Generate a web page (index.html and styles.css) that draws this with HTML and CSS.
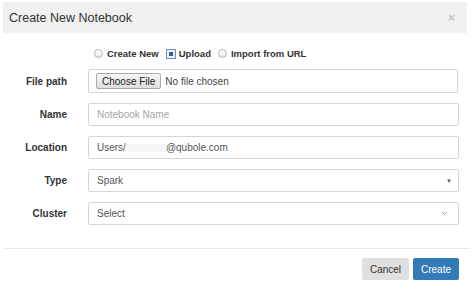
FILE: index.html
```html
<!DOCTYPE html>
<html>
<head>
<meta charset="utf-8">
<link rel="stylesheet" href="styles.css">
</head>
<body>
<div class="dialog">
  <div class="header">
    <span class="title">Create New Notebook</span>
    <span class="close">×</span>
  </div>
  <div class="body">
    <div class="modes">
      <label class="opt"><span class="radio"></span>Create New</label>
      <label class="opt"><span class="check"><span class="dot"></span></span>Upload</label>
      <label class="opt"><span class="radio"></span>Import from URL</label>
    </div>
    <div class="form">
      <div class="lbl">File path</div>
      <div class="field file"><span class="filebtn">Choose File</span><span class="filetext">No file chosen</span></div>
      <div class="lbl">Name</div>
      <div class="field placeholder">Notebook Name</div>
      <div class="lbl">Location</div>
      <div class="field">Users/<span class="blur"></span>@qubole.com</div>
      <div class="lbl">Type</div>
      <div class="field select"><span>Spark</span><span class="caret">▼</span></div>
      <div class="lbl">Cluster</div>
      <div class="field select"><span>Select</span><svg class="chev" width="7" height="5" viewBox="0 0 7 5"><path d="M1 1 L3.5 3.5 L6 1" fill="none" stroke="#aaa" stroke-width="1"/></svg></div>
    </div>
  </div>
  <div class="footer">
    <span class="btn cancel">Cancel</span>
    <span class="btn create">Create</span>
  </div>
</div>
</body>
</html>
```
FILE: styles.css
```css
html, body { margin: 0; padding: 0; background: #fff; }
body { font-family: "Liberation Sans", Arial, sans-serif; color: #333; }
.dialog { width: 474px; height: 295px; position: relative; }
.header {
  margin: 2px 7px 0 3px;
  height: 31px;
  background: #f0f0f0;
  display: flex;
  align-items: center;
  justify-content: space-between;
  padding: 0 12px 0 6px;
}
.title { font-size: 12.5px; color: #333; }
.close { font-size: 12px; color: #c4c4c4; font-weight: bold; }
.body { padding-top: 14px; }
.modes { display: flex; align-items: center; margin-left: 94px; height: 13px; font-size: 9.5px; font-weight: bold; color: #333; }
.opt { display: flex; align-items: center; margin-right: 7px; }
.radio { width: 7px; height: 7px; border-radius: 50%; border: 1px solid #b5b5b5; background: linear-gradient(#fff, #e6e6e6); margin-right: 4px; }
.check { width: 8px; height: 8px; border: 1px solid #6d8fbf; background: #eef3fa; margin-right: 3px; display: flex; align-items: center; justify-content: center; }
.dot { width: 4px; height: 4px; background: #3a5f95; }
.form {
  margin-top: 9px;
  display: grid;
  grid-template-columns: 67px 371px;
  column-gap: 21px;
  row-gap: 10px;
  align-items: center;
}
.lbl { text-align: right; font-size: 10px; font-weight: bold; color: #333; }
.field {
  height: 21px;
  border: 1px solid #d6d6d6;
  border-radius: 2px;
  display: flex;
  align-items: center;
  padding: 0 8px;
  font-size: 10px;
  color: #555;
  box-sizing: content-box;
  width: 353px;
}
.file { height: 22px; padding-left: 7px; }
.placeholder { color: #a5a5a5; }
.filebtn {
  border: 1px solid #a9a9a9;
  background: linear-gradient(#f6f6f6, #dedede);
  border-radius: 2px;
  height: 14px;
  padding: 0 5px;
  display: flex; align-items: center;
  color: #222;
  font-size: 10px;
  margin-right: 4px;
}
.filetext { color: #444; }
.blur { display: inline-block; width: 40px; height: 8px; background: #f5f5f5; }
.select { justify-content: space-between; }
.caret { font-size: 6px; color: #555; margin-right: -2px; }
.chev { margin-right: 2px; }
.footer {
  position: absolute;
  left: 3px; right: 4px; top: 246px;
  border-top: 1px solid #e8e8e8;
  display: flex;
  justify-content: flex-end;
  padding-top: 9px;
  padding-right: 11px;
  gap: 4px;
}
.btn {
  height: 22px;
  display: flex; align-items: center; justify-content: center;
  font-size: 10px;
  border-radius: 2px;
}
.cancel { width: 47px; background: #e0e0e0; color: #333; }
.create { width: 46px; background: #337ab7; color: #fff; }
```
